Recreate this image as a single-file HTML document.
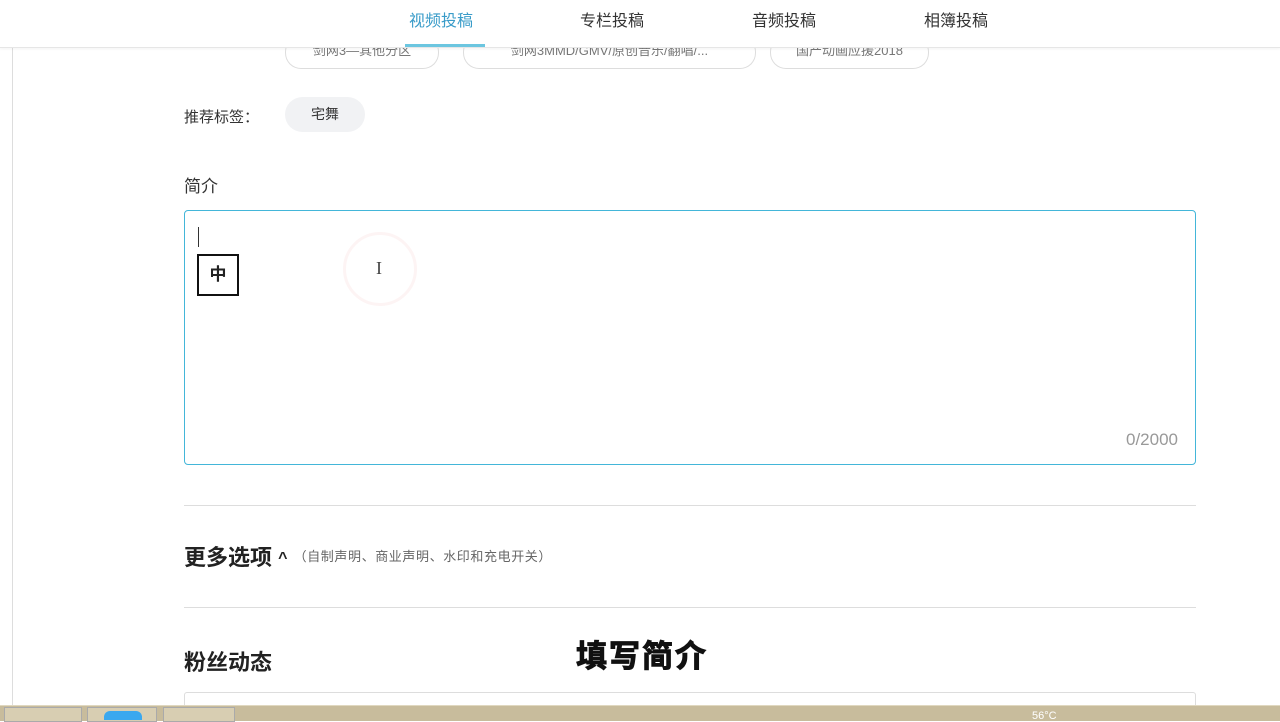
<!DOCTYPE html>
<html><head><meta charset="utf-8"><style>
body{margin:0;width:1280px;height:720px;overflow:hidden;background:#fff;font-family:"Liberation Sans","Noto Sans CJK SC",sans-serif;position:relative;color:#222}
.a{position:absolute}
.nav{left:0;top:0;width:1280px;height:47px;background:#fff;border-bottom:1px solid #e6e6e6;box-shadow:0 1px 3px rgba(0,0,0,.05)}
.nav span{position:absolute;top:7px;font-size:16px;color:#333}
.pill{top:36px;height:32px;border:1px solid #ddd;border-radius:16px;font-size:13px;color:#777;line-height:30px;text-align:center;border-top:none}
</style></head><body>
<div class="a" style="left:12px;top:0;width:1px;height:706px;background:#ddd"></div>
<div class="a pill" style="left:285px;width:152px">剑网3—其他分区</div>
<div class="a pill" style="left:463px;width:291px">剑网3MMD/GMV/原创音乐/翻唱/...</div>
<div class="a pill" style="left:770px;width:157px">国产动画应援2018</div>
<div class="a nav">
<span style="left:409px;color:#3a9cc9">视频投稿</span>
<div class="a" style="left:405px;top:44px;width:80px;height:3px;background:#6cc6e0"></div>
<span style="left:580px">专栏投稿</span>
<span style="left:752px">音频投稿</span>
<span style="left:924px">相簿投稿</span>
</div>
<div class="a" style="left:184px;top:106px;font-size:15px;color:#333">推荐标签：</div>
<div class="a" style="left:285px;top:97px;width:80px;height:35px;border-radius:18px;background:#f1f2f4;font-size:14px;text-align:center;line-height:35px;color:#333">宅舞</div>
<div class="a" style="left:184px;top:172px;font-size:17px;color:#333">简介</div>
<div class="a" style="left:184px;top:210px;width:1010px;height:253px;border:1px solid #43b6d9;border-radius:4px"></div>
<div class="a" style="left:198px;top:227px;width:1px;height:20px;background:#333"></div>
<div class="a" style="left:197px;top:254px;width:38px;height:38px;border:2px solid #111;font-size:17px;text-align:center;line-height:38px;font-weight:bold">中</div>
<div class="a" style="left:343px;top:232px;width:68px;height:68px;border-radius:50%;border:3px solid rgba(240,180,180,.15)"></div>
<div class="a" style="left:376px;top:258px;font-size:18px;color:#444;font-family:'Liberation Serif',serif">I</div>
<div class="a" style="left:1126px;top:430px;font-size:17px;color:#999">0/2000</div>
<div class="a" style="left:184px;top:505px;width:1012px;height:1px;background:#ddd"></div>
<div class="a" style="left:184px;top:540px;font-size:22px;font-weight:bold;color:#222">更多选项 <span style="font-size:16px;position:relative;top:-2px">^</span> <span style="font-size:13px;font-weight:normal;color:#666;letter-spacing:0.6px;position:relative;top:-4px">（自制声明、商业声明、水印和充电开关）</span></div>
<div class="a" style="left:184px;top:607px;width:1012px;height:1px;background:#ddd"></div>
<div class="a" style="left:184px;top:645px;font-size:22px;font-weight:bold;color:#222">粉丝动态</div>
<div class="a" style="left:576px;top:631px;font-size:31px;letter-spacing:2px;font-weight:bold;color:#111;-webkit-text-stroke:1px #111;text-shadow:0 0 2px #fff">填写简介</div>
<div class="a" style="left:184px;top:692px;width:1010px;height:20px;border:1px solid #ddd;border-radius:3px"></div>
<div class="a" style="left:0;top:705px;width:1280px;height:15px;background:#c8bc9c;border-top:1px solid #e0d8c0"></div>
<div class="a" style="left:4px;top:707px;width:76px;height:13px;background:#d8ceb2;border:1px solid #aaa"></div>
<div class="a" style="left:87px;top:707px;width:68px;height:13px;background:#d8ceb2;border:1px solid #aaa"></div>
<div class="a" style="left:104px;top:711px;width:38px;height:9px;background:#3aa8ef;border-radius:6px 6px 0 0"></div>
<div class="a" style="left:163px;top:707px;width:70px;height:13px;background:#d8ceb2;border:1px solid #aaa"></div>
<div class="a" style="left:1032px;top:710px;font-size:11px;color:#fff">56°C</div>
</body></html>
